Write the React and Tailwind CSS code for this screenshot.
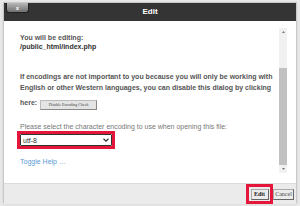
import React from 'react';

const font = { fontFamily: '"Liberation Sans", Arial, sans-serif' };
const serif = { fontFamily: '"Liberation Serif", serif' };

const App = () => {
    return (
        <div className="w-[300px] h-[206px] bg-[#e9e9e9] pt-[2px] pl-[3px] overflow-hidden" style={font}>
            <div className="w-[294px] h-[201px] border border-[#c8c8c8] bg-white flex flex-col shadow-sm">
                {/* Title bar */}
                <div className="relative h-[18px] bg-[#343434] flex items-center justify-center shrink-0">
                    <div className="absolute left-[2px] top-0 w-[23px] h-[10px] rounded-b-[3px] bg-gradient-to-b from-[#b8b8b8] to-[#707070] border border-[#222] border-t-0 flex items-center justify-center text-white text-[6px] leading-none font-bold">
                        x
                    </div>
                    <span className="text-white text-[8px] font-bold leading-none">Edit</span>
                </div>

                {/* Body */}
                <div className="h-[162px] flex shrink-0">
                    <div className="flex-1 pl-[16px] pt-[12px] text-[7px] leading-[9px]">
                        <p className="font-bold text-[#555]">You will be editing:</p>
                        <p className="font-bold text-[#333]">/public_html/index.php</p>
                        <p className="font-bold text-[#555] mt-[20px] leading-[11px] whitespace-nowrap">
                            If encodings are not important to you because you will only be working with<br />
                            English or other Western languages, you can disable this dialog by clicking
                        </p>
                        <div className="flex items-start mt-[4px]">
                            <span className="font-bold text-[#555] mt-[1px]">here:</span>
                            <button className="ml-[3px] mt-[3px] w-[57px] h-[10px] bg-[#e4e4e4] border border-[#bbb] border-r-[#888] border-b-[#888] text-[4px] leading-none text-[#444]" style={serif}>
                                Disable Encoding Check
                            </button>
                        </div>
                        <p className="text-[#777] mt-[12px] whitespace-nowrap">Please select the character encoding to use when opening this file:</p>
                        <div className="w-[98px] h-[18px] border-[3px] border-[#e4173b] p-0 -ml-[3px]">
                            <div className="h-full border border-[#333] rounded-[1px] bg-white flex items-center justify-between px-[2px]">
                                <span className="text-[#333]">utf-8</span>
                                <svg width="6" height="4" viewBox="0 0 6 4">
                                    <path d="M0.5 0.8 L3 3.2 L5.5 0.8" fill="none" stroke="#333" strokeWidth="1.2" />
                                </svg>
                            </div>
                        </div>
                        <p className="text-[#5b9bd5] mt-[8px]">Toggle Help …</p>
                    </div>
                    {/* Scrollbar */}
                    <div className="w-[8px] mr-[9px] mt-[7px] h-[145px] bg-[#f1f1f1] flex flex-col items-center">
                        <svg width="5" height="8" viewBox="0 0 5 8" className="shrink-0">
                            <path d="M1 5 L2.5 3 L4 5 Z" fill="#777" />
                        </svg>
                        <div className="w-full h-[32px]"></div>
                        <div className="w-full flex-1 bg-[#c1c1c1]"></div>
                        <svg width="5" height="8" viewBox="0 0 5 8" className="shrink-0">
                            <path d="M1 3 L2.5 5 L4 3 Z" fill="#777" />
                        </svg>
                    </div>
                </div>

                {/* Footer */}
                <div className="flex-1 bg-[#ebebeb] border-t border-[#dcdcdc] flex items-center justify-end pr-[2px]">
                    <div className="h-[20px] w-[27px] border-[3px] border-[#e4173b] flex items-center justify-center">
                        <button className="w-[18px] h-[11px] bg-[#ececec] border border-[#aaa] border-r-[#666] border-b-[#666] text-[6px] font-bold leading-none text-[#222]" style={serif}>
                            Edit
                        </button>
                    </div>
                    <button className="w-[21px] h-[11px] bg-[#ececec] border border-[#aaa] border-r-[#666] border-b-[#666] text-[6px] leading-none text-[#444]" style={serif}>
                        Cancel
                    </button>
                </div>
            </div>
        </div>
    );
};

export default App;
